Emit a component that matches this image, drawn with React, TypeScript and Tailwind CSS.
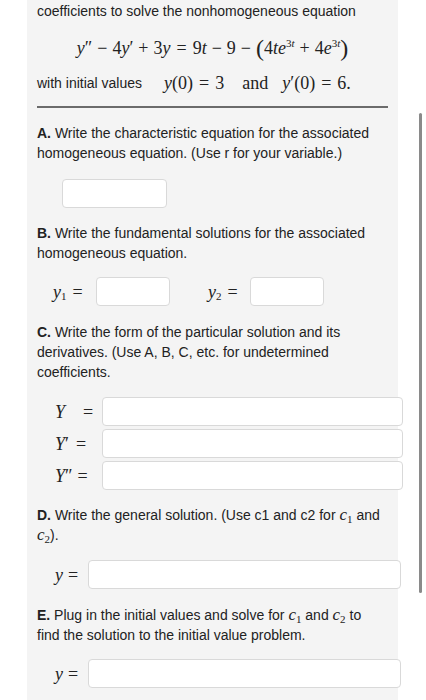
import React from 'react';

const serif = { fontFamily: '"Liberation Serif", "Times New Roman", serif' };

function V({ children }: { children: React.ReactNode }) {
  return <i className="italic">{children}</i>;
}

// binary operator / relation with TeX-like spacing
function Op({ children, rel = false }: { children: React.ReactNode; rel?: boolean }) {
  return <span className={rel ? 'mx-[6px]' : 'mx-[5px]'}>{children}</span>;
}

function Box({ className }: { className: string }) {
  return <div className={`h-[29px] shrink-0 rounded-[4px] border border-[#d9d9d9] bg-white ${className}`} />;
}

function MathLabel({ children, className = '' }: { children: React.ReactNode; className?: string }) {
  return (
    <span className={`shrink-0 text-[18px] text-[#222] ${className}`} style={serif}>
      {children}
    </span>
  );
}

function C({ n }: { n: string }) {
  return (
    <span className="text-[17px]" style={serif}>
      <V>c</V>
      <sub className="text-[11px]">{n}</sub>
    </span>
  );
}

export default function App() {
  return (
    <div
      className="relative h-[700px] w-[426px] overflow-hidden bg-white text-[14px] leading-[20px] text-[#222]"
      style={{ fontFamily: '"Liberation Sans", Arial, sans-serif' }}
    >
      <div className="ml-[27px] h-full w-[371px] bg-[#f4f4f4] px-[10px] pt-[1px]">
        <p>coefficients to solve the nonhomogeneous equation</p>

        {/* main equation */}
        <div className="mt-[15px] flex items-center justify-center text-[18px]" style={serif}>
          <V>y</V>″<Op>−</Op>4<V>y</V>′<Op>+</Op>3<V>y</V>
          <Op rel>=</Op>9<V>t</V>
          <Op>−</Op>9<Op>−</Op>
          <span className="text-[24px] leading-none">(</span>
          4<V>te</V>
          <sup className="text-[11px]">
            3<V>t</V>
          </sup>
          <Op>+</Op>4<V>e</V>
          <sup className="text-[11px]">
            3<V>t</V>
          </sup>
          <span className="text-[24px] leading-none">)</span>
        </div>

        <div className="mt-[13px] flex items-center">
          <span>with initial values</span>
          <span className="ml-[22px] text-[18px]" style={serif}>
            <V>y</V>(0)<Op rel>=</Op>3
          </span>
          <span className="ml-[18px] text-[18px]" style={serif}>
            and
          </span>
          <span className="ml-[14px] text-[18px]" style={serif}>
            <V>y</V>′(0)<Op rel>=</Op>6.
          </span>
        </div>

        <div className="mt-[13px] h-[2px] bg-[#6b6b6b]" />

        {/* A */}
        <p className="mt-[15px]">
          <b>A.</b> Write the characteristic equation for the associated homogeneous equation. (Use r for your
          variable.)
        </p>
        <Box className="ml-[25px] mt-[16px] w-[105px]" />

        {/* B */}
        <p className="mt-[15px]">
          <b>B.</b> Write the fundamental solutions for the associated homogeneous equation.
        </p>
        <div className="mt-[14px] flex items-center">
          <MathLabel className="ml-[16px] w-[43px]">
            <V>y</V>
            <sub className="text-[11px]">1</sub>
            <Op rel>=</Op>
          </MathLabel>
          <Box className="w-[74px]" />
          <MathLabel className="ml-[38px] w-[42px]">
            <V>y</V>
            <sub className="text-[11px]">2</sub>
            <Op rel>=</Op>
          </MathLabel>
          <Box className="w-[74px]" />
        </div>

        {/* C */}
        <p className="mt-[16px]">
          <b>C.</b> Write the form of the particular solution and its derivatives. (Use A, B, C, etc. for undetermined
          coefficients.
        </p>
        <div className="mt-[15px] flex flex-col gap-[3px]">
          {[
            <>
              <V>Y</V>
              <span className="ml-[18px]">=</span>
            </>,
            <>
              <V>Y</V>′<span className="ml-[7px]">=</span>
            </>,
            <>
              <V>Y</V>″<span className="ml-[5px]">=</span>
            </>,
          ].map((label, i) => (
            <div key={i} className="flex items-center">
              <MathLabel className="ml-[18px] w-[47px]">{label}</MathLabel>
              <Box className="w-[301px]" />
            </div>
          ))}
        </div>

        {/* D */}
        <p className="mt-[15px]">
          <b>D.</b> Write the general solution. (Use c1 and c2 for <C n="1" /> and <C n="2" />
          ).
        </p>
        <div className="mt-[15px] flex items-center">
          <MathLabel className="ml-[18px] w-[33px]">
            <V>y</V>
            <span className="ml-[5px]">=</span>
          </MathLabel>
          <Box className="w-[313px]" />
        </div>

        {/* E */}
        <p className="mt-[16px]">
          <b>E.</b> Plug in the initial values and solve for <C n="1" /> and <C n="2" /> to
          <br />
          find the solution to the initial value problem.
        </p>
        <div className="mt-[14px] flex items-center">
          <MathLabel className="ml-[18px] w-[33px]">
            <V>y</V>
            <span className="ml-[5px]">=</span>
          </MathLabel>
          <Box className="w-[313px]" />
        </div>
      </div>

      {/* scrollbar */}
      <div className="absolute left-[419px] top-[113px] h-[480px] w-[3px] rounded-full bg-[#8a8a8a]" />
    </div>
  );
}
